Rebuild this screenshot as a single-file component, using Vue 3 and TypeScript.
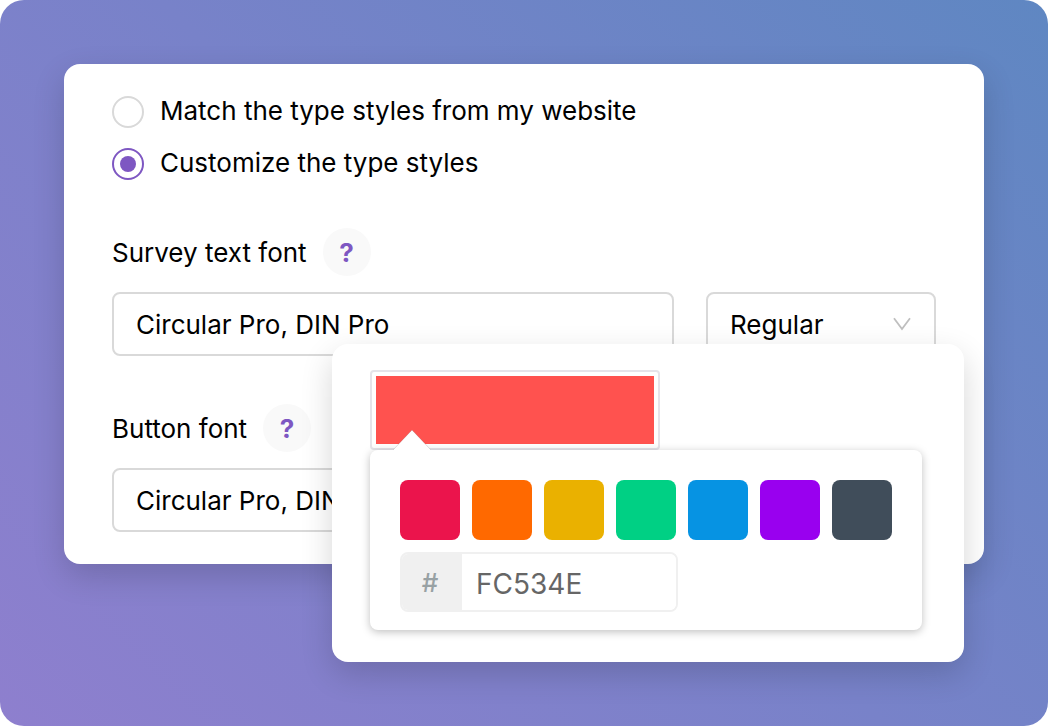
<script setup lang="ts">
import { ref } from 'vue'

type TypeMode = 'match' | 'customize'

const mode = ref<TypeMode>('customize')
const surveyFont = ref('Circular Pro, DIN Pro')
const buttonFont = ref('Circular Pro, DIN Pro')
const weight = ref('Regular')
const hex = ref('FC534E')
const accent = ref('#ff524f')

const modes: { value: TypeMode; label: string }[] = [
  { value: 'match', label: 'Match the type styles from my website' },
  { value: 'customize', label: 'Customize the type styles' },
]

const swatches = ['#eb144c', '#ff6900', '#eab100', '#00d084', '#0693e3', '#9900ef', '#404d5a']

function pick(color: string) {
  accent.value = color
  hex.value = color.slice(1).toUpperCase()
}
</script>

<template>
  <main class="stage">
    <form class="card" @submit.prevent>
      <div class="modes" role="radiogroup">
        <label v-for="item in modes" :key="item.value" class="mode">
          <input v-model="mode" class="radio" type="radio" name="type-mode" :value="item.value" />
          <span class="mode-text">{{ item.label }}</span>
        </label>
      </div>

      <section class="group">
        <div class="heading">
          <label id="survey-label" class="heading-text" for="survey-font">Survey text font</label>
          <button type="button" class="help">?</button>
        </div>
        <div class="fields">
          <input id="survey-font" v-model="surveyFont" class="field" type="text" />
          <div class="select-wrap">
            <select v-model="weight" class="field" aria-labelledby="survey-label">
              <option>Regular</option>
            </select>
            <svg class="chevron" viewBox="0 0 18 14" width="18" height="14" aria-hidden="true">
              <path d="M1 1.2 L9 12 L17 1.2" fill="none" stroke="#bfbfbf" stroke-width="1.8" />
            </svg>
          </div>
        </div>
      </section>

      <section class="group">
        <div class="heading">
          <label class="heading-text" for="button-font">Button font</label>
          <button type="button" class="help">?</button>
        </div>
        <div class="fields">
          <input id="button-font" v-model="buttonFont" class="field" type="text" />
        </div>
      </section>

      <div class="popup">
        <button type="button" class="preview">
          <span class="preview-fill" :style="{ background: accent }"></span>
        </button>
        <div class="picker">
          <svg class="arrow" viewBox="0 0 40 20" width="40" height="20" aria-hidden="true">
            <path d="M1 20 L20 0 L39 20" fill="#fff" stroke="#000" stroke-opacity="0.12" stroke-width="1" />
          </svg>
          <div class="swatches">
            <button
              v-for="color in swatches"
              :key="color"
              type="button"
              class="swatch"
              :style="{ background: color }"
              @click="pick(color)"
            ></button>
          </div>
          <div class="hex">
            <label class="hash" for="hex-value">#</label>
            <input id="hex-value" v-model="hex" class="hex-input" type="text" />
          </div>
        </div>
      </div>
    </form>
  </main>
</template>

<style>
body {
  margin: 0;
  background: #fff;
}
</style>

<style scoped>
.stage,
.stage * {
  box-sizing: border-box;
}

.stage {
  min-height: 100vh;
  padding: 64px;
  border-radius: 24px;
  background: linear-gradient(45deg, #8e7fce 0%, #7882c9 50%, #5f87c2 100%);
  font-family: Inter, 'Liberation Sans', sans-serif;
  font-size: 26px;
  line-height: 32px;
  color: #000;
}

.card {
  position: relative;
  padding: 32px 48px;
  border-radius: 16px;
  background: #fff;
  box-shadow: 0 12px 32px rgba(0, 0, 0, 0.16);
}

.modes {
  display: flex;
  flex-direction: column;
  gap: 20px;
}

.mode {
  display: flex;
  align-items: center;
  gap: 16px;
  height: 32px;
}

.mode-text {
  padding-bottom: 2px;
}

.radio {
  appearance: none;
  display: grid;
  place-items: center;
  flex: none;
  width: 32px;
  height: 32px;
  margin: 0;
  border: 2px solid #d9d9d9;
  border-radius: 50%;
  background: #fff;
}

.radio:checked {
  border-color: #7e57c2;
}

.radio:checked::before {
  content: '';
  width: 16px;
  height: 16px;
  border-radius: 50%;
  background: #7e57c2;
}

.group {
  margin-top: 48px;
}

.heading {
  display: flex;
  align-items: center;
  gap: 16px;
  margin-bottom: 16px;
}

.heading-text {
  padding-top: 2px;
}

.help {
  width: 48px;
  height: 48px;
  padding: 2px 0 0;
  border: 0;
  border-radius: 50%;
  background: #f9f9f9;
  color: #7e57c2;
  font: inherit;
  font-weight: 700;
}

.fields {
  display: grid;
  grid-template-columns: minmax(0, 1fr) 230px;
  gap: 32px;
}

.field {
  display: block;
  width: 100%;
  height: 64px;
  padding: 0 22px;
  border: 2px solid #d9d9d9;
  border-radius: 8px;
  background: #fff;
  color: #000;
  font: inherit;
  appearance: none;
  outline: none;
}

select.field {
  padding-top: 2px;
}

.select-wrap {
  display: grid;
  align-items: center;
}

.select-wrap > * {
  grid-area: 1 / 1;
}

.chevron {
  justify-self: end;
  margin-right: 25px;
  pointer-events: none;
}

.popup {
  position: absolute;
  top: 280px;
  left: 268px;
  right: 20px;
  padding: 26px 42px 32px 38px;
  border-radius: 16px;
  background: #fff;
  box-shadow: 0 12px 32px rgba(0, 0, 0, 0.16);
}

.preview {
  display: block;
  width: 290px;
  height: 80px;
  padding: 4px;
  border: 2px solid #e5e4ea;
  border-radius: 4px;
  background: #fff;
}

.preview-fill {
  display: block;
  height: 100%;
}

.picker {
  position: relative;
  padding: 30px 30px 18px;
  border-radius: 8px;
  background: #fff;
  box-shadow: 0 2px 8px rgba(0, 0, 0, 0.25);
}

.arrow {
  position: absolute;
  top: -20px;
  left: 22px;
}

.swatches {
  display: flex;
  flex-wrap: wrap;
  gap: 12px;
}

.swatch {
  width: 60px;
  height: 60px;
  padding: 0;
  border: 0;
  border-radius: 8px;
}

.hex {
  display: flex;
  width: 278px;
  height: 60px;
  margin-top: 12px;
  border: 2px solid #f0f0f0;
  border-radius: 8px;
  overflow: hidden;
}

.hash {
  display: grid;
  place-items: center;
  flex: none;
  width: 60px;
  padding: 2px 4px 0 0;
  background: #f0f0f0;
  color: #98a1a4;
  font-weight: 500;
}

.hex-input {
  flex: 1;
  min-width: 0;
  padding: 4px 14px 0;
  border: 0;
  outline: none;
  background: #fff;
  color: #666;
  font: inherit;
  font-size: 28px;
}
</style>
